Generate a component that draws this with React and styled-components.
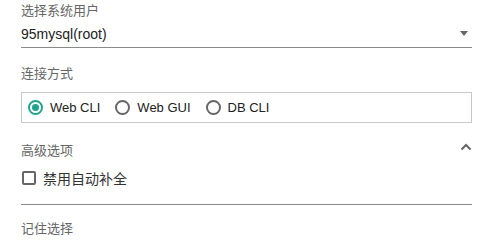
import styled, {createGlobalStyle} from "styled-components";

const GlobalStyle = createGlobalStyle`
  body {
    margin: 0;
    background: #fff;
    font-family: "Liberation Sans", "Noto Sans CJK SC", sans-serif;
  }
`;

const options = ["Web CLI", "Web GUI", "DB CLI"];

const App = () => {
  return (
    <>
      <GlobalStyle />
      <Panel>
        <Label>选择系统用户</Label>
        <Select>
          <span>95mysql(root)</span>
          <Caret />
        </Select>

        <Label $top={17}>连接方式</Label>
        <RadioBox>
          {options.map((opt, i) => (
            <RadioItem key={opt}>
              <RadioCircle $checked={i === 0} />
              {opt}
            </RadioItem>
          ))}
        </RadioBox>

        <SectionHead>
          <Label>高级选项</Label>
          <svg width="12" height="8" viewBox="0 0 12 8">
            <polyline points="1.5,6.5 6,2 10.5,6.5" fill="none" stroke="#666" strokeWidth="2" />
          </svg>
        </SectionHead>
        <CheckRow>
          <CheckBox />
          禁用自动补全
        </CheckRow>
        <Divider />

        <Label $top={15}>记住选择</Label>
      </Panel>
    </>
  );
};

export default App;

const Panel = styled.div`
  display: flex;
  flex-direction: column;
  width: 451px;
  margin-left: 21px;
  padding-top: 2px;
`;

const Label = styled.div`
  margin-top: ${p => p.$top || 0}px;
  font-size: 13px;
  line-height: 18px;
  color: #666;
`;

const Select = styled.div`
  display: flex;
  align-items: center;
  justify-content: space-between;
  height: 27px;
  padding-right: 4px;
  border-bottom: 1px solid #8a8a8a;
  font-size: 14px;
  color: #222;
`;

const Caret = styled.span`
  width: 0;
  height: 0;
  border-left: 4.5px solid transparent;
  border-right: 4.5px solid transparent;
  border-top: 5px solid #666;
`;

const RadioBox = styled.div`
  display: flex;
  align-items: center;
  gap: 15px;
  margin-top: 9px;
  height: 29px;
  padding-left: 6px;
  border: 1px solid #c8c8c8;
`;

const RadioItem = styled.label`
  display: flex;
  align-items: center;
  gap: 7px;
  font-size: 13px;
  color: #222;
`;

const RadioCircle = styled.span`
  box-sizing: border-box;
  width: 15px;
  height: 15px;
  border-radius: 50%;
  border: 2px solid ${p => (p.$checked ? "#20a38a" : "#666")};
  display: flex;
  align-items: center;
  justify-content: center;
  &::after {
    content: "";
    width: 7px;
    height: 7px;
    border-radius: 50%;
    background: ${p => (p.$checked ? "#20a38a" : "transparent")};
  }
`;

const SectionHead = styled.div`
  display: flex;
  align-items: center;
  justify-content: space-between;
  margin-top: 19px;
  svg {
    margin-top: -8px;
  }
`;

const CheckRow = styled.label`
  display: flex;
  align-items: center;
  gap: 7px;
  height: 36px;
  font-size: 14px;
  color: #333;
`;

const CheckBox = styled.span`
  box-sizing: border-box;
  width: 14px;
  height: 14px;
  margin-left: 1px;
  margin-top: -1px;
  border: 2px solid #666;
  border-radius: 2px;
`;

const Divider = styled.div`
  margin-top: 8px;
  height: 1px;
  background: #8a8a8a;
`;
